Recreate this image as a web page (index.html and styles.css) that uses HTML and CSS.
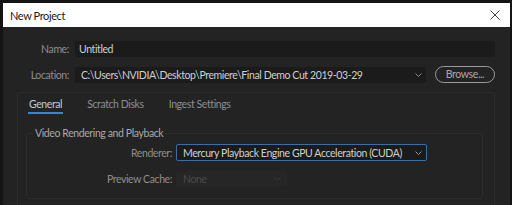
FILE: index.html
```html
<!DOCTYPE html>
<html>
<head>
<meta charset="utf-8">
<link rel="stylesheet" href="styles.css">
</head>
<body>
<div class="window">
  <div class="titlebar">
    <span class="title">New Project</span>
    <svg class="close" width="10" height="10" viewBox="0 0 10 10"><path d="M0.5 0.5 L9.5 9.5 M9.5 0.5 L0.5 9.5" stroke="#444" stroke-width="1" fill="none"/></svg>
  </div>
  <div class="body">
    <div class="form">
      <label class="lbl">Name:</label>
      <div class="field">Untitled</div>
      <label class="lbl">Location:</label>
      <div class="loc-row">
        <div class="select loc">
          <span class="val">C:\Users\NVIDIA\Desktop\Premiere\Final Demo Cut 2019-03-29</span>
          <svg class="chev" width="7" height="4" viewBox="0 0 7 4"><path d="M0.5 0.5 L3.5 3.5 L6.5 0.5" stroke="#8a8a8a" fill="none"/></svg>
        </div>
        <button class="browse">Browse...</button>
      </div>
    </div>
    <div class="panel">
      <div class="tabs">
        <span class="tab active">General</span>
        <span class="tab">Scratch Disks</span>
        <span class="tab">Ingest Settings</span>
      </div>
      <fieldset class="group">
        <legend>Video Rendering and Playback</legend>
        <div class="grid">
          <label class="lbl">Renderer:</label>
          <div class="select renderer">
            <span class="val">Mercury Playback Engine GPU Acceleration (CUDA)</span>
            <svg class="chev" width="7" height="4" viewBox="0 0 7 4"><path d="M0.5 0.5 L3.5 3.5 L6.5 0.5" stroke="#9a9a9a" fill="none"/></svg>
          </div>
          <label class="lbl">Preview Cache:</label>
          <div class="select disabled">
            <span class="val">None</span>
            <svg class="chev" width="7" height="4" viewBox="0 0 7 4"><path d="M0.5 0.5 L3.5 3.5 L6.5 0.5" stroke="#3a3a3a" fill="none"/></svg>
          </div>
        </div>
      </fieldset>
    </div>
  </div>
</div>
</body>
</html>
```
FILE: styles.css
```css
* { box-sizing: border-box; }
html, body {
  margin: 0;
  padding: 0;
  background: #141414;
  height: 100%;
  overflow: hidden;
}
body {
  padding: 3px 2px 0 3px;
  font-family: "Lato", "Noto Sans", sans-serif;
  font-size: 10.5px;
  letter-spacing: -0.4px;
}
.window {
  background: #232323;
  height: 100%;
}
.titlebar {
  height: 24px;
  background: #ffffff;
  display: flex;
  align-items: center;
  justify-content: space-between;
  padding: 0 10px 0 7px;
}
.title {
  color: #1a1a1a;
  font-size: 11px;
}
.close { display: block; }
.body {
  padding: 14px 15px 0 14px;
}
.form {
  display: grid;
  grid-template-columns: 52px 1fr;
  column-gap: 6px;
  row-gap: 9px;
  align-items: center;
}
.lbl {
  color: #8e8e8e;
  text-align: right;
  white-space: nowrap;
}
.field {
  height: 16px;
  background: #1b1b1b;
  border-radius: 2px;
  color: #cfcfcf;
  line-height: 16px;
  padding-left: 4px;
}
.loc-row {
  display: flex;
  align-items: center;
  gap: 9px;
}
.select {
  display: flex;
  align-items: center;
  justify-content: space-between;
  background: #1b1b1b;
  border-radius: 2px;
  color: #cfcfcf;
  padding: 0 5px 0 7px;
  white-space: nowrap;
}
.select.loc {
  flex: 1;
  height: 16px;
  padding: 0 4px 0 6px;
}
.chev { display: block; flex: none; }
.browse {
  width: 60px;
  height: 17px;
  border: 1px solid #9a9a9a;
  border-radius: 9px;
  background: transparent;
  color: #a8a8a8;
  font: inherit;
  letter-spacing: -0.4px;
  padding: 0;
  line-height: 15px;
}
.panel {
  margin-top: 9px;
  border: 1px solid #2c2c2c;
  border-bottom: 0;
  padding: 0 11px 0 10px;
  height: 120px;
}
.tabs {
  display: flex;
  gap: 23px;
  padding-top: 6px;
}
.tab {
  color: #8e8e8e;
  padding: 0 1px;
  height: 15px;
  line-height: 11px;
  border-bottom: 2px solid transparent;
}
.tab.active {
  color: #c8c8c8;
  border-bottom-color: #2f87e0;
}
.group {
  margin: 12px 0 0 -2px;
  border: 1px solid #2c2c2c;
  border-radius: 2px;
  padding: 4px 0 11px 0;
  min-width: 0;
}
.group legend {
  color: #a8a8a8;
  margin-left: 6px;
  padding: 0 2px;
  line-height: 14px;
}
.grid {
  display: grid;
  grid-template-columns: 145px auto;
  column-gap: 4px;
  row-gap: 10px;
  align-items: center;
  justify-items: start;
}
.grid .lbl { justify-self: end; }
.select.renderer {
  width: 251px;
  height: 17px;
  border: 1px solid #3a6ea8;
  padding: 0 4px 0 6px;
}
.select.disabled {
  width: 111px;
  height: 16px;
  background: #262626;
  color: #4a4a4a;
  padding: 0 6px 0 7px;
}
```
